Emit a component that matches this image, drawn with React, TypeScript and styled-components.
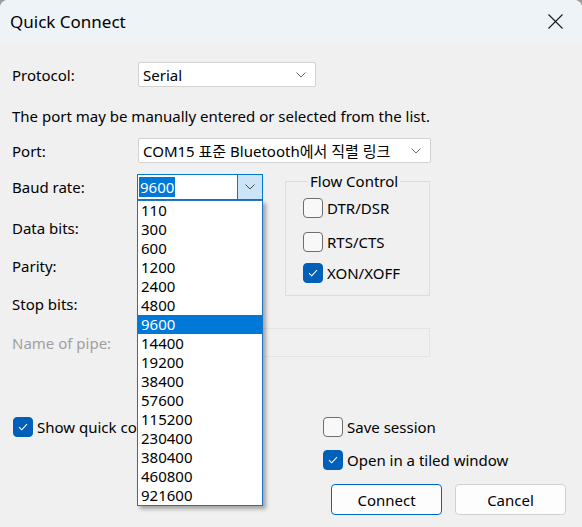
import React from 'react';
import styled, { createGlobalStyle } from 'styled-components';

const GlobalStyle = createGlobalStyle`
  html, body {
    margin: 0;
    padding: 0;
    background: #9c9c9c;
  }
  body {
    font-family: "Noto Sans", "Noto Sans CJK KR", sans-serif;
    font-size: 15px;
    color: #000;
  }
`;

const Window = styled.div`
  width: 582px;
  height: 527px;
  background: #f0f0f0;
  border-radius: 8px 8px 0 0;
  overflow: hidden;
  display: flex;
  flex-direction: column;
`;

const TitleBar = styled.div`
  height: 43px;
  flex: none;
  background: #eef3f8;
  display: flex;
  align-items: center;
  justify-content: space-between;
  padding: 0 19px 0 10px;
  box-sizing: border-box;
`;

const Title = styled.div`
  font-size: 17px;
  line-height: 22px;
`;

const Body = styled.div`
  padding: 0 12px;
  display: flex;
  flex-direction: column;
`;

const Row = styled.div<{ $top: number; $h?: number }>`
  display: flex;
  align-items: center;
  margin-top: ${(p) => p.$top}px;
  height: ${(p) => p.$h ?? 25}px;
`;

const Label = styled.div<{ $disabled?: boolean }>`
  width: 126px;
  flex: none;
  line-height: 20px;
  color: ${(p) => (p.$disabled ? '#a0a0a0' : '#000')};
`;

const Hint = styled.div`
  margin-top: 19px;
  line-height: 20px;
`;

const Select = styled.div<{ $w: number }>`
  width: ${(p) => p.$w}px;
  height: 25px;
  box-sizing: border-box;
  background: #fff;
  border: 1px solid #d2d2d2;
  border-radius: 2px;
  display: flex;
  align-items: center;
  padding: 0 9px 0 4px;
  white-space: nowrap;
`;

const SelectText = styled.span`
  flex: 1;
  line-height: 20px;
`;

const Chevron = ({ color = '#6b6b6b' }: { color?: string }) => (
  <svg width="10" height="6" viewBox="0 0 10 6">
    <path d="M0.5 0.5 L5 5 L9.5 0.5" fill="none" stroke={color} strokeWidth="1" />
  </svg>
);

const CloseIcon = () => (
  <svg width="15" height="15" viewBox="0 0 15 15">
    <path d="M0.5 0.5 L14.5 14.5 M14.5 0.5 L0.5 14.5" stroke="#1a1a1a" strokeWidth="1.1" />
  </svg>
);

const Settings = styled.div`
  display: flex;
  margin-top: 11px;
`;

const LeftCol = styled.div`
  width: 273px;
  flex: none;
  display: flex;
  flex-direction: column;
`;

const Combo = styled.div`
  position: relative;
  width: 126px;
  height: 26px;
  box-sizing: border-box;
  margin-left: -1px;
  border: 1px solid #0078d7;
  background: #fff;
  display: flex;
  align-items: stretch;
`;

const ComboField = styled.div`
  flex: 1;
  display: flex;
  align-items: center;
  padding-left: 1px;
`;

const Selected = styled.span`
  background: #0078d7;
  color: #fff;
  line-height: 20px;
  padding: 0 1px;
`;

const DropButton = styled.div`
  width: 24px;
  background: #cce4f7;
  border-left: 1px solid #0078d7;
  display: flex;
  align-items: center;
  justify-content: center;
`;

const DropList = styled.div`
  position: absolute;
  top: 25px;
  left: -1px;
  width: 126px;
  box-sizing: border-box;
  background: #fff;
  border: 1px solid #1e74c8;
  box-shadow: 3px 3px 4px rgba(0, 0, 0, 0.32);
  z-index: 10;
`;

const Option = styled.div<{ $active?: boolean }>`
  height: 19px;
  line-height: 19px;
  padding-left: 3px;
  background: ${(p) => (p.$active ? '#0078d7' : 'transparent')};
  color: ${(p) => (p.$active ? '#fff' : '#000')};
`;

const GroupBox = styled.fieldset`
  width: 145px;
  height: 125px;
  box-sizing: border-box;
  margin: -3px 0 0 0;
  padding: 7px 0 0 17px;
  border: 1px solid #dcdcdc;
  display: flex;
  flex-direction: column;
`;

const Legend = styled.legend`
  padding: 0 2px;
  margin-left: 5px;
  line-height: 20px;
`;

const CheckRow = styled.label<{ $top?: number }>`
  display: flex;
  align-items: center;
  gap: 4px;
  margin-top: ${(p) => p.$top ?? 0}px;
  line-height: 20px;
  white-space: nowrap;
`;

const Box = styled.span<{ $checked?: boolean }>`
  width: 20px;
  height: 20px;
  box-sizing: border-box;
  flex: none;
  border-radius: 4px;
  border: 1px solid ${(p) => (p.$checked ? '#005fb8' : '#6e6e6e')};
  background: ${(p) => (p.$checked ? '#005fb8' : '#f8f8f8')};
  display: flex;
  align-items: center;
  justify-content: center;
`;

const Check = ({ label, checked, top }: { label: string; checked?: boolean; top?: number }) => (
  <CheckRow $top={top}>
    <Box $checked={checked}>
      {checked && (
        <svg width="10" height="8" viewBox="0 0 10 8">
          <path d="M1 4.2 L3.7 6.8 L9 1.2" fill="none" stroke="#fff" strokeWidth="1.1" />
        </svg>
      )}
    </Box>
    {label}
  </CheckRow>
);

const PipeInput = styled.div`
  width: 292px;
  height: 29px;
  box-sizing: border-box;
  border: 1px solid #e3e3e3;
  background: #f0f0f0;
`;

const Bottom = styled.div`
  display: flex;
  margin-top: 60px;
`;

const BottomLeft = styled.div`
  width: 310px;
  flex: none;
  padding-left: 1px;
`;

const BottomRight = styled.div`
  display: flex;
  flex-direction: column;
`;

const Buttons = styled.div`
  display: flex;
  gap: 13px;
  margin-top: 14px;
  padding-left: 8px;
`;

const Button = styled.button<{ $primary?: boolean }>`
  width: 111px;
  height: 31px;
  box-sizing: border-box;
  border-radius: 4px;
  border: 1px solid ${(p) => (p.$primary ? '#0067c0' : '#d0d0d0')};
  background: #fdfdfd;
  font-family: inherit;
  font-size: 15px;
  color: #000;
  padding: 0;
`;

const rates = [
  '110', '300', '600', '1200', '2400', '4800', '9600', '14400',
  '19200', '38400', '57600', '115200', '230400', '380400', '460800', '921600',
];

export default function App() {
  return (
    <Window>
      <GlobalStyle />
      <TitleBar>
        <Title>Quick Connect</Title>
        <CloseIcon />
      </TitleBar>
      <Body>
        <Row $top={19}>
          <Label>Protocol:</Label>
          <Select $w={178}>
            <SelectText>Serial</SelectText>
            <Chevron />
          </Select>
        </Row>
        <Hint>The port may be manually entered or selected from the list.</Hint>
        <Row $top={12}>
          <Label>Port:</Label>
          <Select $w={293}>
            <SelectText>COM15 표준 Bluetooth에서 직렬 링크</SelectText>
            <Chevron />
          </Select>
        </Row>
        <Settings>
          <LeftCol>
            <Row $top={0} $h={26}>
              <Label>Baud rate:</Label>
              <Combo>
                <ComboField>
                  <Selected>9600</Selected>
                </ComboField>
                <DropButton>
                  <Chevron color="#4a4a4a" />
                </DropButton>
                <DropList>
                  {rates.map((r) => (
                    <Option key={r} $active={r === '9600'}>
                      {r}
                    </Option>
                  ))}
                </DropList>
              </Combo>
            </Row>
            <Row $top={15} $h={26}>
              <Label>Data bits:</Label>
            </Row>
            <Row $top={12} $h={26}>
              <Label>Parity:</Label>
            </Row>
            <Row $top={12} $h={26}>
              <Label>Stop bits:</Label>
            </Row>
          </LeftCol>
          <GroupBox>
            <Legend>Flow Control</Legend>
            <Check label="DTR/DSR" />
            <Check label="RTS/CTS" top={14} />
            <Check label="XON/XOFF" checked top={11} />
          </GroupBox>
        </Settings>
        <Row $top={11} $h={29}>
          <Label $disabled>Name of pipe:</Label>
          <PipeInput />
        </Row>
        <Bottom>
          <BottomLeft>
            <Check label="Show quick connect on startup" checked />
          </BottomLeft>
          <BottomRight>
            <Check label="Save session" />
            <Check label="Open in a tiled window" checked top={13} />
            <Buttons>
              <Button $primary>Connect</Button>
              <Button>Cancel</Button>
            </Buttons>
          </BottomRight>
        </Bottom>
      </Body>
    </Window>
  );
}
